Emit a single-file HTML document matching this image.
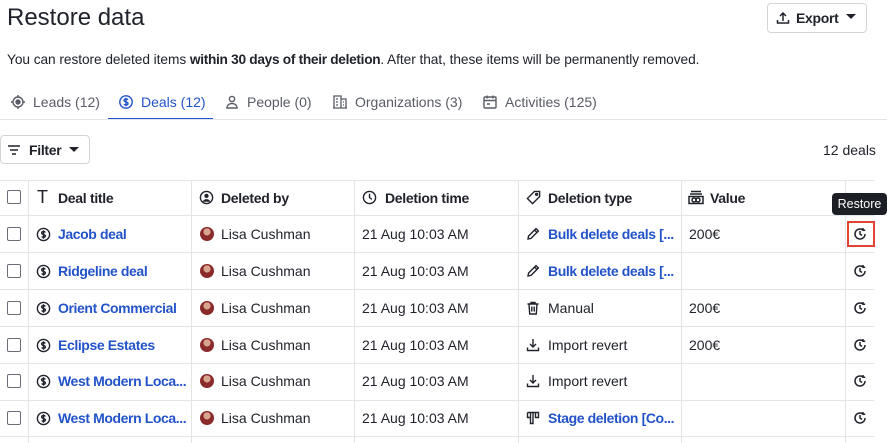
<!DOCTYPE html>
<html><head><style>
*{box-sizing:border-box;margin:0;padding:0}
body{width:887px;height:443px;overflow:hidden;background:#fff;font-family:"Liberation Sans",sans-serif;color:#21232c;position:relative;font-size:14px}
.a{position:absolute;white-space:nowrap}
.l{color:#2353c9;font-weight:bold;letter-spacing:-0.4px}
b,.bd{letter-spacing:-0.3px}
.hl{position:absolute;left:0;width:874px;height:1px;background:#e3e4e7}
.vl{position:absolute;top:180px;height:263px;width:1px;background:#e3e4e7}
.cb{position:absolute;left:7px;width:14px;height:14px;border:1.5px solid #6a6d75;border-radius:2px}
svg{position:absolute}
.av{position:absolute;left:200px;width:14px;height:14px;border-radius:50%;background:radial-gradient(circle at 50% 35%,#d9a48f 0 30%,#8a2a2a 32%)}
</style></head><body>
<div class="a" style="left:7px;top:4px;font-size:24px;color:#21232c">Restore data</div>
<div class="a" style="left:767px;top:3px;width:100px;height:30px;border:1px solid #d3d4d8;border-radius:4px"></div>
<svg style="left:775px;top:10px" width="16" height="16" viewBox="0 0 16 16" fill="none" stroke="#21232c" stroke-width="1.5"><path d="M8 11V3M5 6l3-3 3 3M2.5 10v3h11v-3"/></svg>
<div class="a bd" style="left:796px;top:10px;font-weight:bold;font-size:14px">Export</div>
<svg style="left:846px;top:14px" width="10" height="6"><path d="M0 0h10L5 5z" fill="#21232c"/></svg>
<div class="a" style="left:7px;top:52px;font-size:13.7px;letter-spacing:-0.05px">You can restore deleted items <b>within 30 days of their deletion</b>. After that, these items will be permanently removed.</div>
<svg style="left:10px;top:94px" width="16" height="16" viewBox="0 0 16 16" fill="none" stroke="#595c66" stroke-width="1.4"><circle cx="8" cy="8" r="5"/><circle cx="8" cy="8" r="2" fill="#595c66"/><path d="M8 1v2M8 13v2M1 8h2M13 8h2"/></svg>
<div class="a" style="left:33px;top:94px;color:#595c66">Leads (12)</div>
<svg style="left:118px;top:94px" width="16" height="16" viewBox="0 0 16 16" fill="none" stroke="#2353c9" stroke-width="1.4"><circle cx="8" cy="8" r="6.2"/><path d="M10 5.8c-.4-.6-1.1-.9-2-.9-1.2 0-2 .6-2 1.5 0 2 4 1 4 3.1 0 .9-.8 1.5-2 1.5-.9 0-1.6-.3-2-.9M8 3.8v8.4"/></svg>
<div class="a" style="left:141px;top:94px;color:#2353c9">Deals (12)</div>
<div class="a" style="left:108px;top:118px;width:105px;height:2px;background:#2353c9"></div>
<svg style="left:224px;top:94px" width="16" height="16" viewBox="0 0 16 16" fill="none" stroke="#595c66" stroke-width="1.4"><circle cx="8" cy="5" r="2.6"/><path d="M3 14c0-3 2.2-4.5 5-4.5s5 1.5 5 4.5z"/></svg>
<div class="a" style="left:247px;top:94px;color:#595c66">People (0)</div>
<svg style="left:332px;top:94px" width="16" height="16" viewBox="0 0 16 16" fill="none" stroke="#595c66" stroke-width="1.3"><path d="M2 14V2h7v12M9 5h5v9M1 14h14M4 5h2M4 8h2M4 11h2M11 8h1M11 11h1"/></svg>
<div class="a" style="left:355px;top:94px;color:#595c66">Organizations (3)</div>
<svg style="left:482px;top:94px" width="16" height="16" viewBox="0 0 16 16" fill="none" stroke="#595c66" stroke-width="1.4"><rect x="2" y="3" width="12" height="11" rx="1"/><path d="M2 6.5h12M5 1.5v3M11 1.5v3M5 10h3"/></svg>
<div class="a" style="left:505px;top:94px;color:#595c66">Activities (125)</div>
<div class="hl" style="top:119px;width:887px"></div>
<div class="a" style="left:0;top:135px;width:90px;height:29px;border:1px solid #d3d4d8;border-radius:4px"></div>
<svg style="left:7px;top:143px" width="14" height="14"><path d="M1 3h12M3 7h8M5 11h4" stroke="#21232c" stroke-width="1.5"/></svg>
<div class="a bd" style="left:29px;top:142px;font-weight:bold">Filter</div>
<svg style="left:69px;top:147px" width="10" height="6"><path d="M0 0h10L5 5z" fill="#21232c"/></svg>
<div class="a" style="left:823px;top:142px">12 deals</div>
<div class="hl" style="top:180px"></div>
<div class="hl" style="top:215px"></div>
<div class="hl" style="top:252px"></div>
<div class="hl" style="top:289px"></div>
<div class="hl" style="top:326px"></div>
<div class="hl" style="top:363px"></div>
<div class="hl" style="top:400px"></div>
<div class="hl" style="top:436px"></div>
<div class="vl" style="left:28px"></div><div class="vl" style="left:191px"></div><div class="vl" style="left:354px"></div><div class="vl" style="left:518px"></div><div class="vl" style="left:681px"></div><div class="vl" style="left:845px"></div>
<div class="cb" style="top:190px"></div>
<div class="a" style="left:37px;top:187px;font-size:18px">T</div>
<div class="a bd" style="left:58px;top:190px;font-weight:bold">Deal title</div>
<svg style="left:199px;top:190px" width="15" height="15" viewBox="0 0 16 16"><circle cx="8" cy="8" r="6.5" fill="none" stroke="#21232c" stroke-width="1.5"/><circle cx="8" cy="6.3" r="2.3" fill="#21232c"/><path d="M3.8 12.5c1-2 2.4-2.8 4.2-2.8s3.2.8 4.2 2.8" fill="#21232c"/></svg>
<div class="a bd" style="left:221px;top:190px;font-weight:bold">Deleted by</div>
<svg style="left:362px;top:190px" width="15" height="15" viewBox="0 0 16 16" fill="none" stroke="#21232c" stroke-width="1.5"><circle cx="8" cy="8" r="6.5"/><path d="M8 4v4l2.5 2"/></svg>
<div class="a bd" style="left:385px;top:190px;font-weight:bold">Deletion time</div>
<svg style="left:526px;top:190px" width="15" height="15" viewBox="0 0 16 16" fill="none" stroke="#21232c" stroke-width="1.5"><path d="M9 1.5h5.5V7L7 14.5 1.5 9z"/><circle cx="11.3" cy="4.7" r="1"/></svg>
<div class="a bd" style="left:548px;top:190px;font-weight:bold">Deletion type</div>
<svg style="left:688px;top:190px" width="16" height="15" viewBox="0 0 16 15" fill="none" stroke="#21232c" stroke-width="1.5"><path d="M3 1.5h10M2 4h12"/><rect x="1" y="6.5" width="14" height="7"/><circle cx="6" cy="10" r="2"/><circle cx="10" cy="10" r="2"/></svg>
<div class="a bd" style="left:710px;top:190px;font-weight:bold">Value</div>

<div class="cb" style="top:227px"></div><div class="cb" style="top:264px"></div><div class="cb" style="top:301px"></div><div class="cb" style="top:338px"></div><div class="cb" style="top:374px"></div><div class="cb" style="top:411px"></div>
<svg style="left:36px;top:227px" width="15" height="15" viewBox="0 0 16 16" fill="none" stroke="#21232c" stroke-width="1.5"><circle cx="8" cy="8" r="6.5"/><path d="M10 5.8c-.4-.6-1.1-.9-2-.9-1.2 0-2 .6-2 1.5 0 2 4 1 4 3.1 0 .9-.8 1.5-2 1.5-.9 0-1.6-.3-2-.9M8 3.5v9"/></svg>
<svg style="left:36px;top:264px" width="15" height="15" viewBox="0 0 16 16" fill="none" stroke="#21232c" stroke-width="1.5"><circle cx="8" cy="8" r="6.5"/><path d="M10 5.8c-.4-.6-1.1-.9-2-.9-1.2 0-2 .6-2 1.5 0 2 4 1 4 3.1 0 .9-.8 1.5-2 1.5-.9 0-1.6-.3-2-.9M8 3.5v9"/></svg>
<svg style="left:36px;top:301px" width="15" height="15" viewBox="0 0 16 16" fill="none" stroke="#21232c" stroke-width="1.5"><circle cx="8" cy="8" r="6.5"/><path d="M10 5.8c-.4-.6-1.1-.9-2-.9-1.2 0-2 .6-2 1.5 0 2 4 1 4 3.1 0 .9-.8 1.5-2 1.5-.9 0-1.6-.3-2-.9M8 3.5v9"/></svg>
<svg style="left:36px;top:338px" width="15" height="15" viewBox="0 0 16 16" fill="none" stroke="#21232c" stroke-width="1.5"><circle cx="8" cy="8" r="6.5"/><path d="M10 5.8c-.4-.6-1.1-.9-2-.9-1.2 0-2 .6-2 1.5 0 2 4 1 4 3.1 0 .9-.8 1.5-2 1.5-.9 0-1.6-.3-2-.9M8 3.5v9"/></svg>
<svg style="left:36px;top:374px" width="15" height="15" viewBox="0 0 16 16" fill="none" stroke="#21232c" stroke-width="1.5"><circle cx="8" cy="8" r="6.5"/><path d="M10 5.8c-.4-.6-1.1-.9-2-.9-1.2 0-2 .6-2 1.5 0 2 4 1 4 3.1 0 .9-.8 1.5-2 1.5-.9 0-1.6-.3-2-.9M8 3.5v9"/></svg>
<svg style="left:36px;top:411px" width="15" height="15" viewBox="0 0 16 16" fill="none" stroke="#21232c" stroke-width="1.5"><circle cx="8" cy="8" r="6.5"/><path d="M10 5.8c-.4-.6-1.1-.9-2-.9-1.2 0-2 .6-2 1.5 0 2 4 1 4 3.1 0 .9-.8 1.5-2 1.5-.9 0-1.6-.3-2-.9M8 3.5v9"/></svg>
<div class="a l" style="left:58px;top:226px">Jacob deal</div>
<div class="a l" style="left:58px;top:263px">Ridgeline deal</div>
<div class="a l" style="left:58px;top:300px">Orient Commercial</div>
<div class="a l" style="left:58px;top:337px">Eclipse Estates</div>
<div class="a l" style="left:58px;top:373px">West Modern Loca...</div>
<div class="a l" style="left:58px;top:410px">West Modern Loca...</div>

<div class="av" style="top:227px"></div><div class="av" style="top:264px"></div><div class="av" style="top:301px"></div><div class="av" style="top:338px"></div><div class="av" style="top:374px"></div><div class="av" style="top:411px"></div>
<div class="a" style="left:221px;top:226px">Lisa Cushman</div>
<div class="a" style="left:221px;top:263px">Lisa Cushman</div>
<div class="a" style="left:221px;top:300px">Lisa Cushman</div>
<div class="a" style="left:221px;top:337px">Lisa Cushman</div>
<div class="a" style="left:221px;top:373px">Lisa Cushman</div>
<div class="a" style="left:221px;top:410px">Lisa Cushman</div>
<div class="a" style="left:362px;top:226px">21 Aug 10:03 AM</div>
<div class="a" style="left:362px;top:263px">21 Aug 10:03 AM</div>
<div class="a" style="left:362px;top:300px">21 Aug 10:03 AM</div>
<div class="a" style="left:362px;top:337px">21 Aug 10:03 AM</div>
<div class="a" style="left:362px;top:373px">21 Aug 10:03 AM</div>
<div class="a" style="left:362px;top:410px">21 Aug 10:03 AM</div>

<svg style="left:526px;top:227px" width="14" height="14" viewBox="0 0 14 14" fill="none" stroke="#21232c" stroke-width="1.4"><path d="M2 12l.6-3L10 1.6l2.4 2.4L5 11.4zM8.5 3l2.4 2.4"/></svg>
<svg style="left:526px;top:264px" width="14" height="14" viewBox="0 0 14 14" fill="none" stroke="#21232c" stroke-width="1.4"><path d="M2 12l.6-3L10 1.6l2.4 2.4L5 11.4zM8.5 3l2.4 2.4"/></svg>
<svg style="left:526px;top:301px" width="14" height="14" viewBox="0 0 14 14" fill="none" stroke="#21232c" stroke-width="1.4"><path d="M1.5 3h11M5 3V1.5h4V3M3 3l.7 10h6.6L11 3M5.8 5.5v5M8.2 5.5v5"/></svg>
<svg style="left:526px;top:338px" width="14" height="14" viewBox="0 0 14 14" fill="none" stroke="#21232c" stroke-width="1.4"><path d="M7 1v8M4 6l3 3 3-3M1.5 9.5v3h11v-3"/></svg>
<svg style="left:526px;top:374px" width="14" height="14" viewBox="0 0 14 14" fill="none" stroke="#21232c" stroke-width="1.4"><path d="M7 1v8M4 6l3 3 3-3M1.5 9.5v3h11v-3"/></svg>
<svg style="left:526px;top:411px" width="14" height="14" viewBox="0 0 14 14" fill="none" stroke="#21232c" stroke-width="1.4"><path d="M1.5 1.5h11v5h-3v-2M1.5 1.5v5h3M4.5 1.5v11h2.5V1.5M9.5 1.5v5"/></svg>
<div class="a l" style="left:548px;top:226px">Bulk delete deals [...</div>
<div class="a l" style="left:548px;top:263px">Bulk delete deals [...</div>
<div class="a" style="left:548px;top:300px">Manual</div>
<div class="a" style="left:548px;top:337px">Import revert</div>
<div class="a" style="left:548px;top:373px">Import revert</div>
<div class="a l" style="left:548px;top:410px">Stage deletion [Co...</div>
<div class="a" style="left:689px;top:226px">200€</div>
<div class="a" style="left:689px;top:300px">200€</div>
<div class="a" style="left:689px;top:337px">200€</div>

<div class="a" style="left:832px;top:193px;width:55px;height:22px;background:#1d1f26;border-radius:4px;color:#fff;font-size:12.5px;line-height:22px;text-align:center">Restore</div>
<div class="a" style="left:847px;top:221px;width:28px;height:26px;border:2px solid #e2442f"></div>
<svg style="left:853px;top:227px" width="14" height="14" viewBox="0 0 14 14" fill="none" stroke="#21232c" stroke-width="1.5"><path d="M12 7A5 5 0 1 1 10 3M10 1v2.2h2.2M7 4v3l2 1.5"/></svg>
<svg style="left:853px;top:264px" width="14" height="14" viewBox="0 0 14 14" fill="none" stroke="#21232c" stroke-width="1.5"><path d="M12 7A5 5 0 1 1 10 3M10 1v2.2h2.2M7 4v3l2 1.5"/></svg>
<svg style="left:853px;top:301px" width="14" height="14" viewBox="0 0 14 14" fill="none" stroke="#21232c" stroke-width="1.5"><path d="M12 7A5 5 0 1 1 10 3M10 1v2.2h2.2M7 4v3l2 1.5"/></svg>
<svg style="left:853px;top:338px" width="14" height="14" viewBox="0 0 14 14" fill="none" stroke="#21232c" stroke-width="1.5"><path d="M12 7A5 5 0 1 1 10 3M10 1v2.2h2.2M7 4v3l2 1.5"/></svg>
<svg style="left:853px;top:374px" width="14" height="14" viewBox="0 0 14 14" fill="none" stroke="#21232c" stroke-width="1.5"><path d="M12 7A5 5 0 1 1 10 3M10 1v2.2h2.2M7 4v3l2 1.5"/></svg>
<svg style="left:853px;top:411px" width="14" height="14" viewBox="0 0 14 14" fill="none" stroke="#21232c" stroke-width="1.5"><path d="M12 7A5 5 0 1 1 10 3M10 1v2.2h2.2M7 4v3l2 1.5"/></svg>
</body></html>
